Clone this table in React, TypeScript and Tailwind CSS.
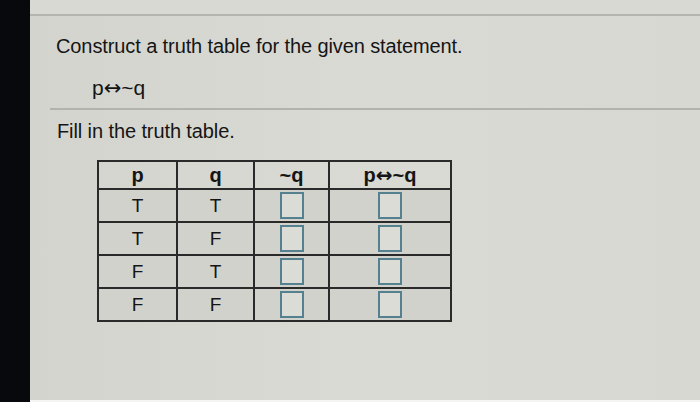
import React from "react";

const Box = () => (
  <div className="mx-auto w-[24px] h-[27px] border-2 border-[#55808f] bg-[#dcdcd6]" />
);

const Arrow = () => (
  <span style={{ fontFamily: '"DejaVu Sans", sans-serif' }}>↔</span>
);

export default function App() {
  const rows = [
    ["T", "T"],
    ["T", "F"],
    ["F", "T"],
    ["F", "F"],
  ];
  return (
    <div
      className="flex w-[700px] h-[402px] bg-[#d8d8d2] text-[#151515] overflow-hidden"
      style={{ fontFamily: '"Liberation Sans", Arial, sans-serif' }}
    >
      <div className="w-[30px] shrink-0 bg-[#07090d]" />
      <div className="flex-1 flex flex-col bg-gradient-to-r from-[#d4d4ce] via-[#dadad4] to-[#d8d8d2]">
        <div className="h-[16px] border-b-2 border-[#b5b5b0] bg-[#d9d9d4]" />
        <div className="pl-[26px] pt-[18px] text-[20px] leading-[24px] tracking-[-0.1px]">
          Construct a truth table for the given statement.
        </div>
        <div className="pl-[62px] pt-[18px] text-[21px] leading-[24px]">
          p<Arrow />~q
        </div>
        <div className="ml-[20px] mt-[8px] border-b-2 border-[#b3b3ae]" />
        <div className="pl-[27px] pt-[10px] text-[20px] leading-[22px] tracking-[-0.1px]">
          Fill in the truth table.
        </div>
        <div className="pl-[67px] pt-[18px]">
          <table className="border-collapse border-2 border-[#2a2a2a] text-[19px] leading-[22px]">
            <thead>
              <tr className="h-[28px] font-bold text-[20px]">
                <th className="w-[79px] border-2 border-[#2a2a2a]">p</th>
                <th className="w-[77px] border-2 border-[#2a2a2a]">q</th>
                <th className="w-[75px] border-2 border-[#2a2a2a]">~q</th>
                <th className="w-[122px] border-2 border-[#2a2a2a]">
                  p<Arrow />~q
                </th>
              </tr>
            </thead>
            <tbody>
              {rows.map((r, i) => (
                <tr key={i} className="h-[33px] bg-[#d2d2cc]">
                  <td className="border-2 border-[#2a2a2a] text-center">{r[0]}</td>
                  <td className="border-2 border-[#2a2a2a] text-center">{r[1]}</td>
                  <td className="border-2 border-[#2a2a2a] text-center">
                    <Box />
                  </td>
                  <td className="border-2 border-[#2a2a2a] text-center">
                    <Box />
                  </td>
                </tr>
              ))}
            </tbody>
          </table>
        </div>
        <div className="flex-1" />
        <div className="h-[2px] bg-[#f4f4f2]" />
      </div>
    </div>
  );
}
